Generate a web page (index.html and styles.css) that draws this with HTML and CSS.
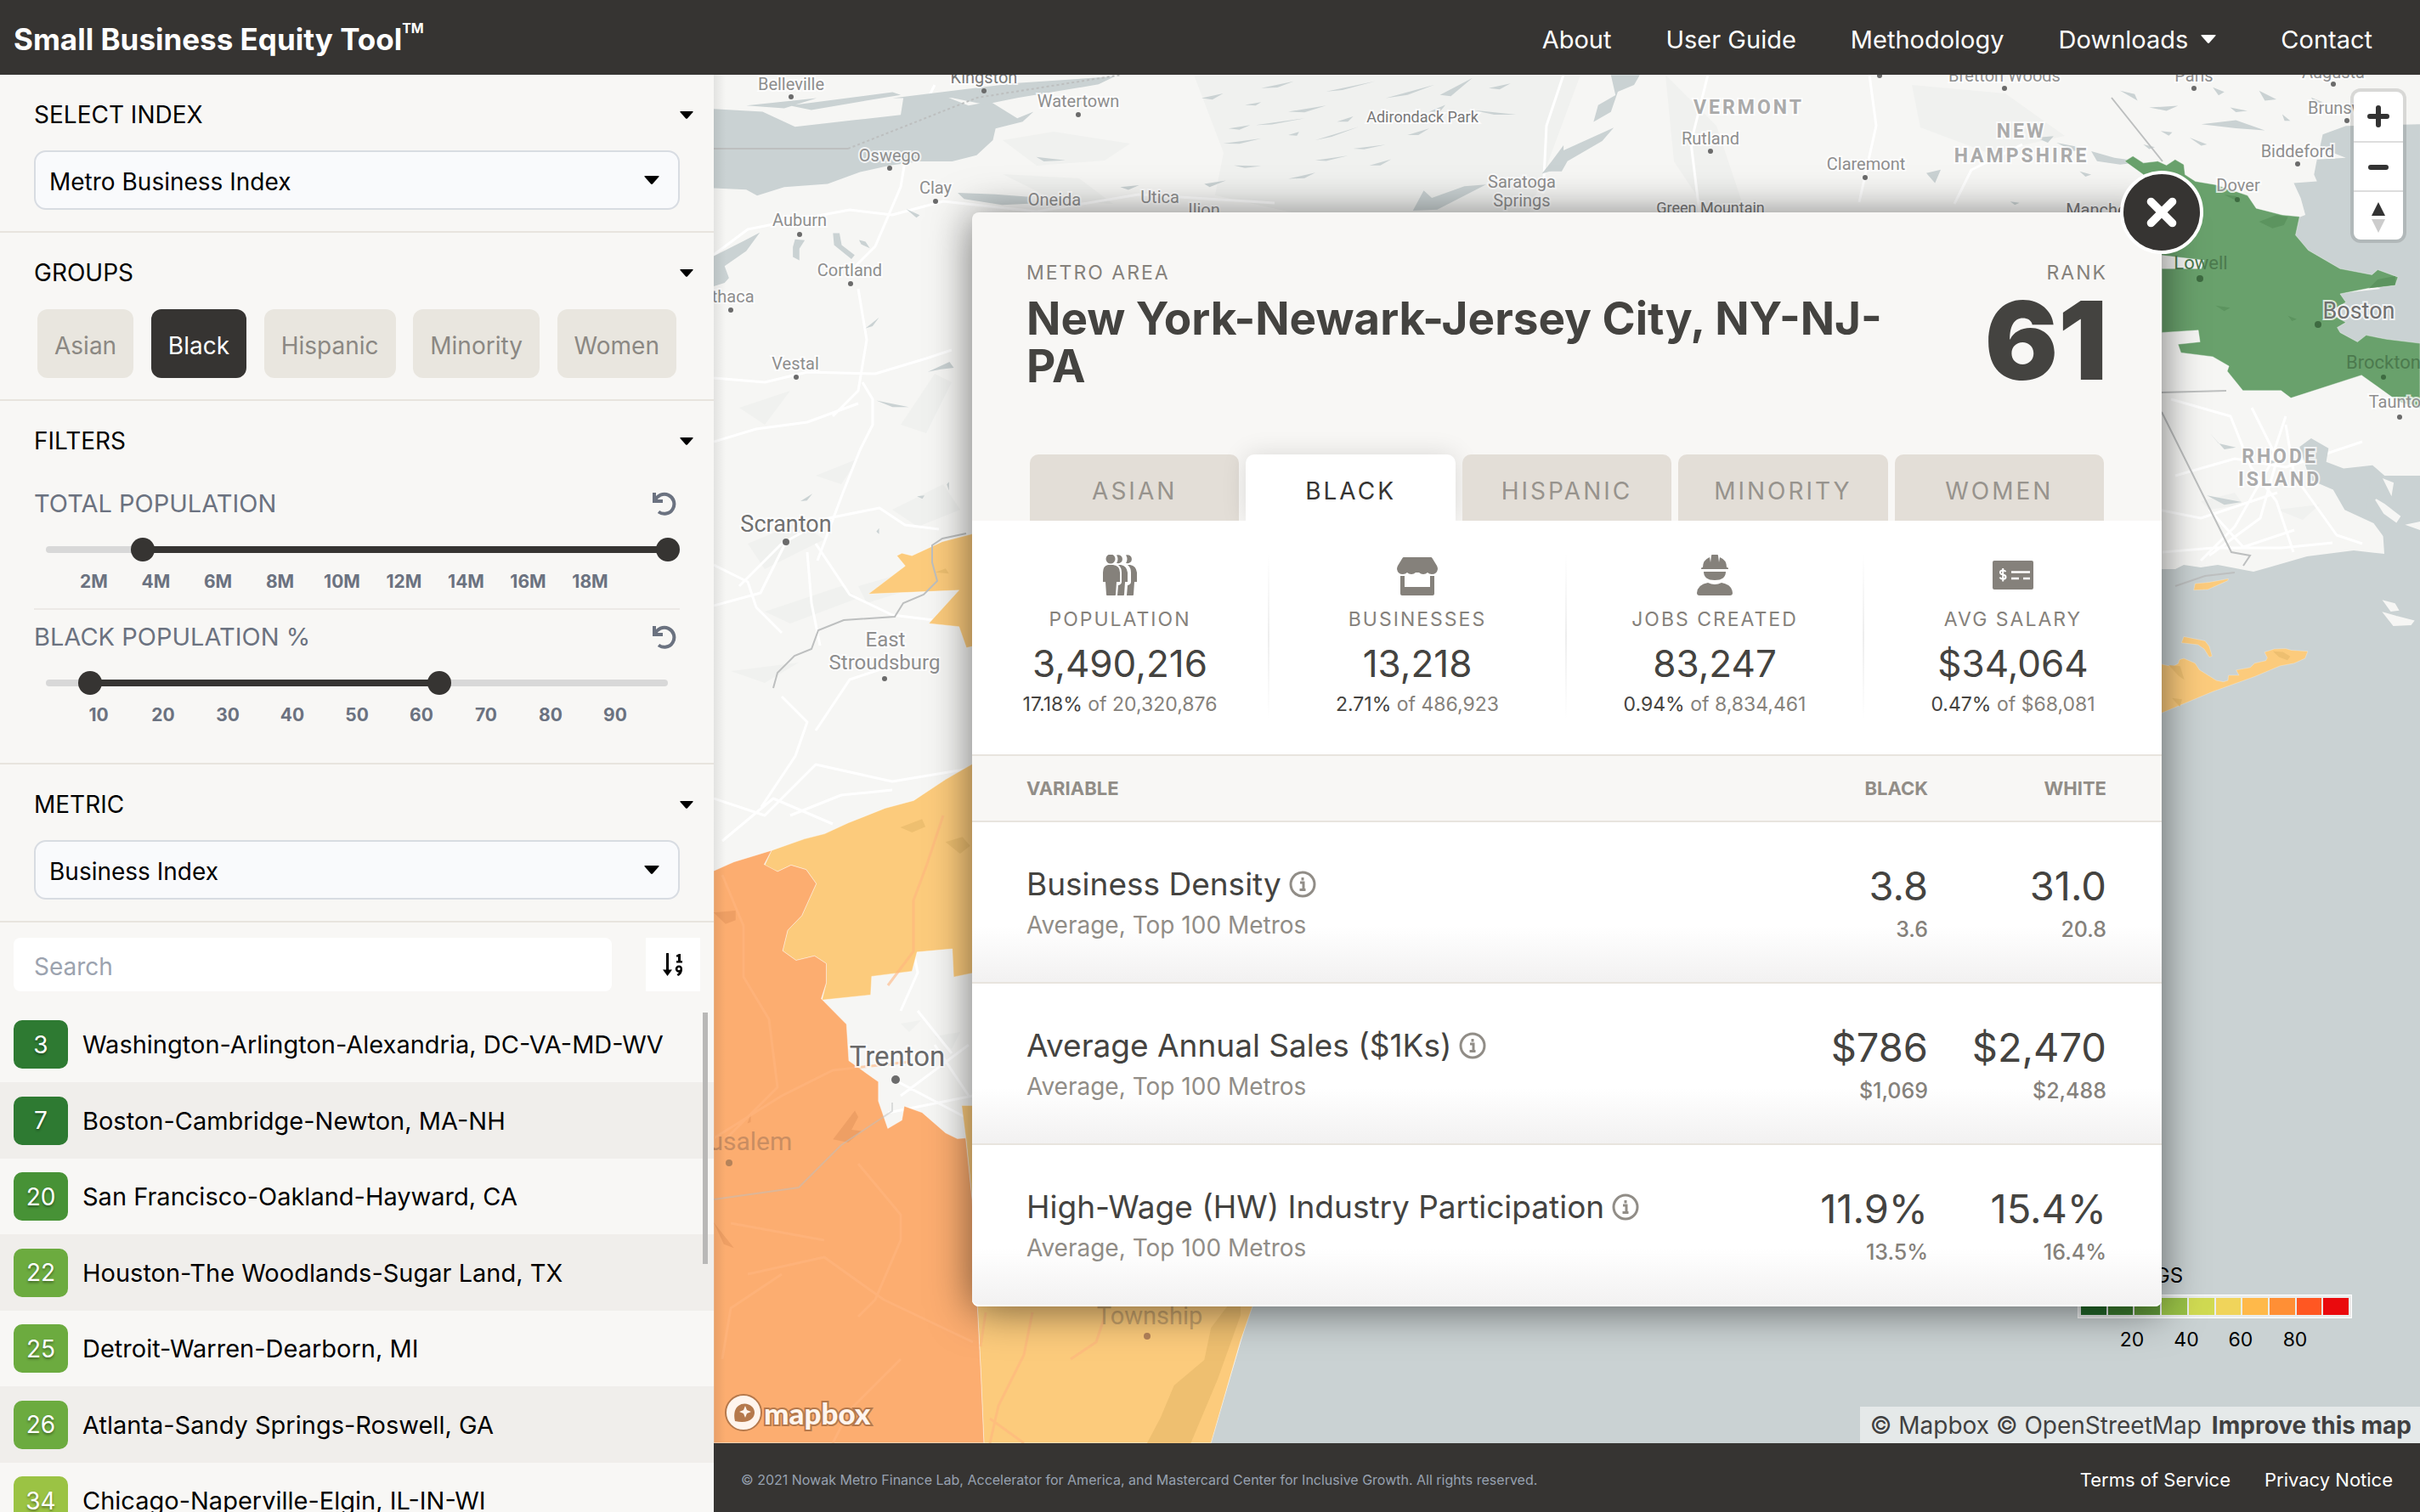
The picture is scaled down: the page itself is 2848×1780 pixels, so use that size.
FILE: index.html
```html
<!DOCTYPE html>
<html lang="en">
<head>
<meta charset="utf-8">
<title>Small Business Equity Tool</title>
<link rel="stylesheet" href="styles.css">
</head>
<body>
<div class="app">
  <header class="topbar">
    <a class="brand" href="#">Small Business Equity Tool<sup>TM</sup></a>
    <nav class="nav">
      <a href="#">About</a>
      <a href="#">User Guide</a>
      <a href="#">Methodology</a>
      <a href="#" class="has-menu">Downloads <svg class="caret" viewBox="0 0 18 10"><path d="M1 0h16q1 0 .5 1L10 9.500q-1 .8-2 0L.5 1Q0 0 1 0z"/></svg></a>
      <a href="#">Contact</a>
    </nav>
  </header>

  <aside class="sidebar">
    <section class="panel">
      <button class="panel-head" type="button">SELECT INDEX <svg class="caret small" viewBox="0 0 18 10"><path d="M1 0h16q1 0 .5 1L10 9.500q-1 .8-2 0L.5 1Q0 0 1 0z"/></svg></button>
      <div class="picker">
        <select aria-label="Index"><option>Metro Business Index</option></select>
        <svg class="caret" viewBox="0 0 18 10"><path d="M1 0h16q1 0 .5 1L10 9.500q-1 .8-2 0L.5 1Q0 0 1 0z"/></svg>
      </div>
    </section>

    <section class="panel">
      <button class="panel-head" type="button">GROUPS <svg class="caret small" viewBox="0 0 18 10"><path d="M1 0h16q1 0 .5 1L10 9.500q-1 .8-2 0L.5 1Q0 0 1 0z"/></svg></button>
      <div class="groups">
        <button type="button">Asian</button>
        <button type="button" class="active">Black</button>
        <button type="button">Hispanic</button>
        <button type="button">Minority</button>
        <button type="button">Women</button>
      </div>
    </section>

    <section class="panel filters">
      <button class="panel-head" type="button">FILTERS <svg class="caret small" viewBox="0 0 18 10"><path d="M1 0h16q1 0 .5 1L10 9.500q-1 .8-2 0L.5 1Q0 0 1 0z"/></svg></button>
      <div class="filter">
        <div class="filter-head"><span>TOTAL POPULATION</span>
          <button type="button" class="reset" aria-label="Reset total population"><svg viewBox="0 0 28 28"><path d="M2 1v10h10M3 10.500A11.500 11.500 0 1 1 7 23.500"/></svg></button></div>
        <div class="range">
          <div class="track" style="--from:15.6%;--to:100%"></div>
          <input type="range" min="0" max="1000" value="156" aria-label="Minimum total population">
          <input type="range" min="0" max="1000" value="1000" aria-label="Maximum total population">
        </div>
        <div class="ticks wide"><span>2M</span><span>4M</span><span>6M</span><span>8M</span><span>10M</span><span>12M</span><span>14M</span><span>16M</span><span>18M</span></div>
      </div>
      <div class="filter">
        <div class="filter-head"><span>BLACK POPULATION %</span>
          <button type="button" class="reset" aria-label="Reset Black population"><svg viewBox="0 0 28 28"><path d="M2 1v10h10M3 10.500A11.500 11.500 0 1 1 7 23.500"/></svg></button></div>
        <div class="range">
          <div class="track" style="--from:7.1%;--to:63.2%"></div>
          <input type="range" min="0" max="1000" value="71" aria-label="Minimum Black population percent">
          <input type="range" min="0" max="1000" value="632" aria-label="Maximum Black population percent">
        </div>
        <div class="ticks"><span>10</span><span>20</span><span>30</span><span>40</span><span>50</span><span>60</span><span>70</span><span>80</span><span>90</span></div>
      </div>
    </section>

    <section class="panel">
      <button class="panel-head" type="button">METRIC <svg class="caret small" viewBox="0 0 18 10"><path d="M1 0h16q1 0 .5 1L10 9.500q-1 .8-2 0L.5 1Q0 0 1 0z"/></svg></button>
      <div class="picker">
        <select aria-label="Metric"><option>Business Index</option></select>
        <svg class="caret" viewBox="0 0 18 10"><path d="M1 0h16q1 0 .5 1L10 9.500q-1 .8-2 0L.5 1Q0 0 1 0z"/></svg>
      </div>
    </section>

    <div class="search">
      <input type="search" placeholder="Search" aria-label="Search metros">
      <button type="button" class="sort" aria-label="Sort by rank">
        <svg viewBox="0 0 24 28"><path d="M5.500 1v21" stroke="#000" stroke-width="3" stroke-linecap="round"/><path d="M0 19.500h11L5.500 27z"/><path d="M16 2.500l3-1.500h2v8h2v2.500h-7V9h2V4.500h-2z"/><path fill-rule="evenodd" d="M19 14.500a4 4 0 0 1 4 4.500c0 4-2 7-5 8l-1.500-2c1.500-.6 2-1.300 2.300-2.200A4 4 0 0 1 19 14.500zm0 2.500a1.600 1.600 0 1 0 .01 0z"/></svg>
      </button>
    </div>

    <div class="list-wrap">
      <ol class="list">
        <li><span class="badge c1">3</span>Washington-Arlington-Alexandria, DC-VA-MD-WV</li>
        <li><span class="badge c1">7</span>Boston-Cambridge-Newton, MA-NH</li>
        <li><span class="badge c2">20</span>San Francisco-Oakland-Hayward, CA</li>
        <li><span class="badge c3">22</span>Houston-The Woodlands-Sugar Land, TX</li>
        <li><span class="badge c3">25</span>Detroit-Warren-Dearborn, MI</li>
        <li><span class="badge c3">26</span>Atlanta-Sandy Springs-Roswell, GA</li>
        <li><span class="badge c4">34</span>Chicago-Naperville-Elgin, IL-IN-WI</li>
      </ol>
      <div class="scroll-thumb"></div>
    </div>
  </aside>

  <main class="map">
    <svg class="map-art" viewBox="840 88 2008 1611" preserveAspectRatio="xMidYMid slice">
      <!-- parks and hills -->
      <g fill="#f0f1ef">
        <path d="M1405 88L1440 180 1430 230 1520 250 1800 250 1860 88z"/>
        <path d="M1960 88l60 60 30 90-40 12-40-60z M2250 100l110 10 70 50-90 20-80-30z M1180 165l60-10 90 14-30 20-80 6z M1180 205l90 5 40 30-70-5z"/>
        <path d="M880 640l60-25 30 20-70 35z M900 720l90-30 20 14-80 30z M1010 690l70-20 30 12-90 28z M1050 600l60-30 20 30-50 20z M860 790l80-10-40 24z M1060 500l40-60 20 10-30 60z M870 480l60-20-30 40z M960 560l50-20-20 30z M2590 590l40-10 10 14-40 6z M2680 600l50-6-20 18z M1100 1220l30-5-10 20z M1060 1205l24-4-14 14z"/>
      </g>
      <!-- roads -->
      <g class="roads">
        <path d="M840 300l40-30 40-8 80-15 50 6 60-16 110 12 120-20 160 10M1010 340l10 60-10 60-30 30M840 445l60 5 50-12 80 2 60-18 30-10M1015 450l12 20v30l-15 30-20 50-30 80M840 520l50-15 60-8 60-22M870 690l50-50 55-30 60-12 30 20 40 5M925 638l-30 60-55 15M950 650l5 60 10 50M840 665l40 20 10 30 30 30M960 640l40 60 50 24 65 8M1100 100l-30 60-10 60-30 70-30 30"/>
        <path d="M840 940l60 20 60-60 90 20 90-15M920 820l30 30-14 40-40 60M850 990l60-50 70 30M960 860l40-60 60-20M930 960l60-24 60-6M2010 88l-20 80 10 82M1840 88l-20 60-4 80M2200 88l8 60-20 90M2300 240l20-40 60-30"/>
        <path d="M1060 1190l20-45-8-40 30-55M1080 1190l40 50M1060 1290l80-60M1045 1310l100-20M1050 1270l95 50M1040 1320l-20-50M1100 1230l40 60M2555 470l70 20 24 60 30 40 20 60M2560 560l70-20 60 10 90-30M2600 600l40 44 60-20M2650 480l30 60-20 70-60 44M2590 660l40-40 40-70 20-60M2690 500l10 60 50 70 30 10M2540 600l50 10 90-30M2545 650l60-5 80 0 60-6"/>
      </g>
      <!-- lakes and ocean -->
      <g fill="#cad2d3">
        <g transform="translate(840 80) scale(.6378 .3954)">
          <path d="M0 122L90 130 150 175 260 155 345 140 350 88 420 80 470 112 510 100 560 150 590 130 570 160 520 180 515 215 485 260 440 278 380 278 325 290 270 310 210 345 130 355 80 380 60 362 0 358z"/>
          <path d="M140 112L330 72 345 80 180 125z M330 90l150-30 80-15 180-20-30 24-150 40-60 20-60-20z M60 112l130-22-60 30z M450 372l70 4 62 8 0 20-50 4-70-18z M0 560L55 515 85 490 60 545 20 590 28 625 20 640 0 650z"/>
          <path d="M150 510l18 3-10 25 0 35-12-10 0-30z M220 492l12 0 4 35 24 30-6 12-32-42z M268 512l12 5 8 20-16-12z M355 420l25 18-6 8z M595 265l54 10-40 3z M905 345l40-10-30 20z M750 355l35-6-20 14z M1290 425l20-60 15 22 60-35 40-5-90 75z M1545 280l23-50 0 65-40 20z"/>
          <path d="M940 225l70-15-40 16z M1000 170l90-20-60 18z M1060 130l70-18-40 20z M1110 215l80-40-50 30z M960 290l50 2-30 6z M1130 70l90-30-60 26z M1240 90l90-40-50 30z M1180 240l60-12-40 14z M1280 200l40-20-20 20z M1210 290l40-18-20 18z M1340 80l60-50-40 54z M1010 60l60-20-30 18z M1400 125l80 14-40 0z M1110 275l60-14-40 16z M1060 330l50-18-20 16z M950 180l40-10-20 14z M1150 160l30-16-10 16z M1060 200l20-10-4 12z M1320 130l30-20-10 20z M1430 60l40-14-20 18z M1240 150l40-14-20 16z M900 90l40-14-20 18z M980 110l30-8-10 10z"/>
          <path d="M280 775l25-32-12 26z M395 905l40-30 8 18-24 4z M300 990l60 20-30 0z M160 1290l22-22-10 20z M300 1380l5-10 0 18z M430 1240l4-8 0 26z M375 1275l14-2-4 10z"/>
        </g>
        <g transform="translate(1780 0) scale(.6811 .3954)">
          <path d="M1568 370L1440 375 1400 400 1395 440 1440 470 1390 475 1385 520 1390 540 1350 545 1362 590 1370 640 1355 650 1350 700 1375 745 1430 800 1500 860 1420 875 1400 930 1440 1020 1568 1030z"/>
          <path d="M170 223l50 0-10 30-28 20-12 60-30 30 8-50 30-30z M60 510l25-60 90-70-20 40-60 60-10 30z M1000 450l40 20 50 12-40 8-40-10z M715 515l25-10-10 40z M1190 370l60-12 50 30-50-6z M1100 320l50-5-20 15z M1210 260l20 14-10 10z M1290 270l30 26-20 4z M1050 270l25 10 5 20z M905 410l30-5-10 20z M940 425l45 15-15 10z M1120 390l20 4-6 10z M1240 320l30 10-20 4z M1170 410l30 20-10 4z M1330 340l14 20-10 0z M1380 290l20 14-14 4z M1500 300l30 24-20 4z M1090 430l20 8-10 6z M860 600l16 4-8 6z M980 510l20 10-10 6z"/>
          <path d="M1205 1290l15 30 30 12-20 6z M1360 1330l20-25 30 30-4 40 30 20 50-10 60 90 22 80 0 73-50 0-30-70-50-40-20-60-40-30z M1200 1475l60 20-30 8z M1310 1370l10 5-10 6z"/>
        </g>
        <path d="M1425 1699L1475 1530 1640 1290 2200 800 2530 670 2560 670 2570 665 2590 668 2610 665 2652 673 2670 668 2715 655 2770 648 2806 652 2804 622 2785 600 2790 560 2848 560V1699z"/>
      </g>
      <g fill="#f6f6f4" stroke="#f6f6f4" stroke-width="2">
        <path d="M2806 708l12 3 4 7-8 1z M2806 722l14 4 20 5-3 4-20 1z M2796 588l10 6 18 14-4 6-14-10z M2834 618l14-3v8z M2806 565l10 4-2 12z"/>
      </g>
      <!-- metro areas -->
      <g transform="translate(840 600) scale(.3954 .7526)">
        <path class="amber" d="M545 72L560 68 590 72 680 50 769 38 800 38 800 214 769 214 752 216 730 183 640 178 730 126 460 132 485 122 570 88z"/>
        <path class="amber" d="M172 533L270 515 330 507 400 490 510 467 595 455 690 422 769 398 900 370 900 725 769 725 714 731 710 687 605 692 590 722 470 730 467 759 322 767 335 740 335 710 300 698 245 705 205 690 220 658 262 635 305 585 275 563 230 556 190 566 150 558z"/>
        <path class="amber" d="M738 932L900 932 1700 1100 1568 1300 1480 1460 804 1460 795 1350 785 1250 769 1080 752 990z"/>
        <path class="orange" d="M0 565L60 551 172 533 150 555 190 566 230 556 275 563 305 585 262 635 220 658 205 690 245 705 300 698 335 710 335 740 320 765 395 805 402 862 490 895 490 925 518 968 560 955 567 933 620 943 690 975 725 984 750 983 769 1080 785 1250 795 1350 804 1460 0 1460z"/>
        <path fill="#eebf70" d="M1290 1460L1330 1420 1370 1370 1460 1330 1480 1280 1530 1245 1568 1245 1568 1260 1500 1360 1420 1460z"/>
        <path fill="#eebf70" d="M555 497L620 484 630 496 590 505z M690 520l50-8 23 14-30 12z M660 98l30-6 10 8z"/>
        <path fill="#ee9f64" d="M355 985L420 940 430 950 410 970 440 972 400 990z M0 630l65-3 0 15-30 6z M100 960l10-14 0 12z M0 1115l60 40-30-6z"/>
      </g>
      <g transform="translate(2520 560) scale(.3333 .3827)">
        <path class="amber" d="M185 352L190 332 240 328 308 317 305 323 235 350z"/>
        <path class="amber" d="M142 514L150 495 225 508 240 525 250 555 240 558 222 533 200 520z"/>
        <path class="amber" d="M0 580L72 580 110 587 130 578 135 566 150 562 190 577 205 597 265 630 290 634 306 630 308 614 345 614 335 598 385 590 400 577 440 569 445 560 435 543 470 533 510 532 530 537 588 540 578 562 540 577 490 585 400 618 250 665 72 730 0 750z"/>
        <path fill="#eebf70" d="M97 583l40 3 15 42-20-12z M465 540l35 2 26 14-10 12-30-10z M108 684l36 4-8 22z"/>
      </g>
      <!-- borders -->
      <g class="borders">
        <path d="M840 175h158"/>
        <path stroke-dasharray="3 3" d="M998 175L1150 115 1320 88"/>
        <path d="M2544 462l76-2M2544 485l82 165 22 4-8 12M2560 690l35-12 35-4"/>
        <path stroke="#c3c7c8" d="M910 810l5-18 20-20 20-8 8-22 30-12 60-4 10-16 24-10 16-16-6-22 0-20 12-8 28-6M2485 115l60 75"/>
        <path stroke="#c98350" stroke-opacity=".5" stroke-width="2" d="M840 1412l100-14 50-50 60-40 0-10"/>
      </g>
      <g transform="translate(1780 0) scale(.6811 .3954)">
        <path class="green" d="M1058 480L1072 465 1090 485 1115 480 1130 492 1145 475 1160 490 1162 520 1180 540 1215 550 1270 582 1285 620 1330 640 1360 645 1353 700 1375 745 1430 800 1485 818 1495 803 1530 825 1525 850 1480 858 1430 875 1440 900 1410 930 1440 960 1425 975 1430 990 1460 1018 1475 998 1510 1010 1568 1022 1568 1215 1530 1195 1467 1117 1345 1185 1328 1163 1262 1163 1235 1105 1238 1090 1210 1062 1155 1050 1150 1025 1188 1018 1185 983 1122 990 1122 800 1190 800 1195 775 1122 760 1090 520z"/>
        <path fill="#5c945f" d="M1290 660l30-20 20 6-7 24-20 10z M1230 580l20 4 8 20z M1480 858l45-10 0-26-30 10z M1215 910l25 6-10 10z M1340 940l15 10-8 6z"/>
      </g>
      <g class="tint-roads">
        <path d="M850 1030l25 60 0 60 30 50 10 80-60 60M840 1340l80-50 60-30 90-10M1010 1370l50 60v30l-30 70-20 20M880 1500l90-20 70 50 105 50M860 1440l110 20M1060 1600l-60 60-20 39M850 1600l10-60 60-40"/>
        <path stroke="#ffdd9c" d="M1110 960l-20 60-15 40 0 60-30 40M1215 1545l-10 50-30 60-10 44M1300 1550l-10 30-30 20M1165 1670l40 29M1160 1545l-6 40"/>
      </g>
      <!-- place names -->
      <g class="places">
        <text x="931" y="106">Belleville</text><text x="1158" y="98" class="dark">Kingston</text>
        <text x="1269" y="126">Watertown</text><text x="1047" y="190">Oswego</text>
        <text x="1101" y="228">Clay</text><text x="941" y="266">Auburn</text>
        <text x="1241" y="242">Oneida</text><text x="1365" y="239">Utica</text>
        <text x="1417" y="254">Ilion</text><text x="1000" y="325">Cortland</text>
        <text x="860" y="356">Ithaca</text><text x="936" y="435">Vestal</text>
        <text x="1674" y="144" class="dark park">Adirondack Park</text>
        <text x="1791" y="221">Saratoga</text><text x="1791" y="243">Springs</text>
        <text x="2013" y="170">Rutland</text><text x="2196" y="200">Claremont</text>
        <text x="2359" y="96">Bretton Woods</text><text x="2582" y="96">Paris</text>
        <text x="2746" y="92">Augusta</text><text x="2762" y="134">Brunswick</text>
        <text x="2704" y="185">Biddeford</text><text x="2634" y="225">Dover</text>
        <text x="2013" y="251" class="dark park">Green Mountain</text><text x="2484" y="254" class="dark">Manchester</text>
        <text x="2590" y="317" class="on-green">Lowell</text><text x="2805" y="434" class="on-green">Brockton</text>
        <text x="2824" y="480">Taunton</text>
        <text x="1042" y="761" class="mid">East</text><text x="1041" y="788" class="mid">Stroudsburg</text>
        <text x="925" y="626" class="big">Scranton</text><text x="2776" y="375" class="big">Boston</text>
        <text x="1056" y="1255" class="huge">Trenton</text>
        <text x="862" y="1354" class="tinted">Jerusalem</text><text x="1353" y="1559" class="tinted sand">Township</text>
        <text x="2058" y="134" class="state">VERMONT</text><text x="2379" y="162" class="state">NEW</text>
        <text x="2379" y="191" class="state">HAMPSHIRE</text><text x="2683" y="545" class="state">RHODE</text><text x="2683" y="572" class="state">ISLAND</text>
      </g>
      <g fill="#6b6b6b">
        <circle cx="931" cy="114" r="3"/><circle cx="1158" cy="107" r="3"/><circle cx="1269" cy="135" r="3"/><circle cx="1047" cy="198" r="3"/><circle cx="1101" cy="237" r="3"/><circle cx="941" cy="276" r="3"/><circle cx="1001" cy="334" r="3"/><circle cx="860" cy="365" r="3"/><circle cx="937" cy="444" r="3"/><circle cx="925" cy="638" r="4"/><circle cx="1041" cy="799" r="3"/><circle cx="1054" cy="1271" r="5"/><circle cx="2013" cy="178" r="3"/><circle cx="2195" cy="209" r="3"/><circle cx="2359" cy="104" r="3"/><circle cx="2582" cy="104" r="3"/><circle cx="2746" cy="99" r="3"/><circle cx="2762" cy="142" r="3"/><circle cx="2704" cy="193" r="3"/><circle cx="2824" cy="491" r="3"/><circle cx="2212" cy="89" r="3"/>
        <g fill="#3e6b41"><circle cx="2633" cy="235" r="3"/><circle cx="2589" cy="328" r="4"/><circle cx="2728" cy="382" r="4"/><circle cx="2805" cy="444" r="3"/></g>
        <g fill="#b5835a"><circle cx="858" cy="1369" r="4"/><circle cx="1350" cy="1573" r="4"/></g>
      </g>
    </svg>

    <div class="map-controls">
      <button type="button" aria-label="Zoom in"><svg viewBox="0 0 58 58"><path d="M29 19v20M19 29h20" stroke="#333" stroke-width="6" stroke-linecap="round"/></svg></button>
      <button type="button" aria-label="Zoom out"><svg viewBox="0 0 58 58"><path d="M20 29h18" stroke="#333" stroke-width="6" stroke-linecap="round"/></svg></button>
      <button type="button" aria-label="Reset bearing"><svg viewBox="0 0 58 58"><path d="M21 28l8-16 8 16z" fill="#333"/><path d="M21 32l8 16 8-16z" fill="#ccc"/></svg></button>
    </div>

    <div class="legend">
      <div class="legend-title">RANKINGS</div>
      <div class="swatches"><i class="s0"></i><i class="s1"></i><i class="s2"></i><i class="s3"></i><i class="s4"></i><i class="s5"></i><i class="s6"></i><i class="s7"></i><i class="s8"></i><i class="s9"></i></div>
      <div class="legend-ticks"><span>20</span><span>40</span><span>60</span><span>80</span></div>
    </div>

    <a class="mapbox" href="#"><svg viewBox="0 0 44 44"><circle cx="22" cy="22" r="21" fill="#fff5ed" stroke="#b5794c" stroke-width="2"/><path d="M12 32c-2-9 0-15 4-18 5-4 12-3 16 1s4 10 0 14c-4 4-11 5-20 3z" fill="#b5794c"/><path d="M24 14l2 5 5 2-5 2-2 5-2-5-5-2 5-2z" fill="#fff5ed"/></svg><span>mapbox</span></a>
    <div class="attribution"><a href="#">© Mapbox</a> <a href="#">© OpenStreetMap</a> <a href="#" class="improve">Improve this map</a></div>

    <article class="card">
      <button type="button" class="close" aria-label="Close"><svg viewBox="0 0 40 40"><path d="M8 8l24 24M32 8L8 32" stroke="#fff" stroke-width="9" stroke-linecap="round"/></svg></button>
      <header class="card-head">
        <div class="metro"><div class="eyebrow">METRO AREA</div><h1>New York-Newark-Jersey City, NY-NJ-PA</h1></div>
        <div class="rank"><div class="eyebrow">RANK</div><strong>61</strong></div>
      </header>
      <div class="tabs">
        <button type="button">ASIAN</button>
        <button type="button" class="active">BLACK</button>
        <button type="button">HISPANIC</button>
        <button type="button">MINORITY</button>
        <button type="button">WOMEN</button>
      </div>
      <div class="stats">
        <div class="stat">
          <svg viewBox="0 0 48 48"><circle cx="13" cy="5" r="5.500"/><path d="M10 12h6q8 1 8 9v11h-4l-1 15q0 1-1 1H9q-1 0-1-1L7 32H4V21q0-8 6-9z"/><path d="M20 .6a5 5 0 1 1 0 9.200q3-4.600 0-9.200zM22 12h3q7 1 8 9v11h-3l-1 15q0 1-1 1h-7l1-12q4-1 4-4V21q0-6-4-9zM31 .6a5 5 0 1 1 0 9.200q3-4.600 0-9.200zM33 12h3q7 1 8 9v11h-3l-1 15q0 1-1 1h-7l1-12q4-1 4-4V21q0-6-4-9z"/></svg>
          <div class="stat-label">POPULATION</div><div class="stat-value">3,490,216</div><div class="stat-note"><b>17.18%</b> of 20,320,876</div>
        </div>
        <div class="stat">
          <svg viewBox="0 0 48 48"><path d="M8 3h32q1 0 1.500 1L47 13q1 2 1 4-1 6-7 6-3 0-5-2-2 2-5 2t-5-2h-4q-2 2-5 2t-5-2q-2 2-5 2-6 0-7-6 0-2 1-4l5.500-9Q7 3 8 3zM4 25h5v13h30V25h5v21q0 2-2 2H6q-2 0-2-2z"/></svg>
          <div class="stat-label">BUSINESSES</div><div class="stat-value">13,218</div><div class="stat-note"><b>2.71%</b> of 486,923</div>
        </div>
        <div class="stat">
          <svg viewBox="0 0 48 48"><path d="M21 0h6q1 0 1 1l1 8 1-6q8 3 8 12h1q1 0 1 2H8q0-2 1-2h1q0-9 8-12l1 6 1-8q0-1 1-1zM11 20h26q0 10-13 10T11 20zM16 33q8 4 16 0 12 2 13 12 0 3-3 3H6q-3 0-3-3 1-10 13-12z"/></svg>
          <div class="stat-label">JOBS CREATED</div><div class="stat-value">83,247</div><div class="stat-note"><b>0.94%</b> of 8,834,461</div>
        </div>
        <div class="stat">
          <svg viewBox="0 0 48 48"><rect y="7" width="48" height="34" rx="2"/><path d="M22 20.500h22M22 28h9M36 28h8" stroke="#fff" stroke-width="2.400" fill="none"/><path d="M15.500 20q-1.500-2-4-1.500-3 .5-2.500 3 .4 1.500 3 2 3.500.6 3.500 2.700 0 2.300-3 2.500-3 .2-4-2M12.200 16v15.500" stroke="#fff" stroke-width="2" fill="none"/></svg>
          <div class="stat-label">AVG SALARY</div><div class="stat-value">$34,064</div><div class="stat-note"><b>0.47%</b> of $68,081</div>
        </div>
      </div>
      <table class="vars">
        <thead><tr><th>VARIABLE</th><th>BLACK</th><th>WHITE</th></tr></thead>
        <tbody>
          <tr><td><div class="name">Business Density <svg class="info" viewBox="0 0 32 32"><circle cx="16" cy="16" r="14"/><path d="M13 14h4v8M12.500 22.500h7M16 8v3.500"/></svg></div><div class="avg">Average, Top 100 Metros</div></td><td><div class="val">3.8</div><div class="sub">3.6</div></td><td><div class="val">31.0</div><div class="sub">20.8</div></td></tr>
          <tr><td><div class="name">Average Annual Sales ($1Ks) <svg class="info" viewBox="0 0 32 32"><circle cx="16" cy="16" r="14"/><path d="M13 14h4v8M12.500 22.500h7M16 8v3.500"/></svg></div><div class="avg">Average, Top 100 Metros</div></td><td><div class="val">$786</div><div class="sub">$1,069</div></td><td><div class="val">$2,470</div><div class="sub">$2,488</div></td></tr>
          <tr><td><div class="name">High-Wage (HW) Industry Participation <svg class="info" viewBox="0 0 32 32"><circle cx="16" cy="16" r="14"/><path d="M13 14h4v8M12.500 22.500h7M16 8v3.500"/></svg></div><div class="avg">Average, Top 100 Metros</div></td><td><div class="val">11.9%</div><div class="sub">13.5%</div></td><td><div class="val">15.4%</div><div class="sub">16.4%</div></td></tr>
        </tbody>
      </table>
    </article>
  </main>

  <footer class="footer">
    <p>© 2021 Nowak Metro Finance Lab, Accelerator for America, and Mastercard Center for Inclusive Growth. All rights reserved.</p>
    <a href="#">Terms of Service</a>
    <a href="#">Privacy Notice</a>
  </footer>
</div>
</body>
</html>
```
FILE: styles.css
```css
* { box-sizing: border-box; }
body { margin: 0; font-family: Inter, "Open Sans", sans-serif; font-size: 28px; color: #000; }
a { color: inherit; text-decoration: none; }
button, select, input { font: inherit; color: inherit; margin: 0; }
button { border: 0; background: none; padding: 0; }

.app {
  display: grid;
  grid-template: "top top" 88px "side map" minmax(0, 1fr) "side foot" auto / 840px minmax(0, 1fr);
  height: 100vh;
}

/* top bar */
.topbar { grid-area: top; display: flex; justify-content: space-between; align-items: center; padding: 4px 56px 0 16px; background: #363432; color: #fff; }
.brand { font-size: 35px; font-weight: 700; line-height: 48px; }
.brand sup { font-size: 16px; line-height: 0; vertical-align: 20px; }
.nav { display: flex; align-items: center; gap: 64px; font-size: 29px; }
.has-menu { display: flex; align-items: center; gap: 15px; margin-right: 12px; }
.caret { width: 18px; height: 10px; fill: currentColor; flex: none; }
.caret.small { width: 16px; height: 9px; }

/* sidebar */
.sidebar { grid-area: side; display: flex; flex-direction: column; min-height: 0; overflow: hidden; background: #f8f7f5; }
.panel { flex: none; padding: 27px 40px 25px; border-bottom: 2px solid #e8e4de; }
.panel-head { display: flex; justify-content: space-between; align-items: center; width: 776px; line-height: 40px; }
.picker { display: grid; align-items: center; margin-top: 22px; }
.picker select { grid-area: 1 / 1; height: 70px; padding: 4px 16px 0; border: 2px solid #d8dce2; border-radius: 14px; background: #f9fafc; appearance: none; }
.picker .caret { grid-area: 1 / 1; justify-self: end; margin-right: 24px; pointer-events: none; }
.groups { display: flex; justify-content: space-between; margin: 23px 4px 0; }
.groups button { height: 81px; padding: 4px 20px 0; border-radius: 12px; background: #e9e6df; color: #8b8883; }
.groups .active { background: #363432; color: #fff; }

.filters { padding-bottom: 41px; }
.filter + .filter { padding-top: 12px; border-top: 2px solid #ece9e6; margin-top: 16px; }
.panel-head + .filter { margin-top: 34px; }
.filter-head { display: flex; justify-content: space-between; align-items: center; line-height: 40px; font-size: 29px; color: #6b7280; }
.reset { width: 28px; height: 28px; margin-right: 4px; }
.reset svg { display: block; fill: none; stroke: #6b7280; stroke-width: 4; }
.range { display: grid; align-items: center; margin-top: 20px; }
.range > * { grid-area: 1 / 1; }
.track { height: 8px; margin: 0 14px; border-radius: 4px; background: linear-gradient(90deg, #d8d8d8 var(--from), #363432 var(--from) var(--to), #d8d8d8 var(--to)); }
.range input { width: 100%; height: 28px; appearance: none; background: none; pointer-events: none; }
.range input::-webkit-slider-thumb { appearance: none; width: 28px; height: 28px; border-radius: 50%; background: #363432; pointer-events: auto; }
.ticks { display: grid; grid-template-columns: repeat(9, 76px); padding-left: 38px; margin-top: 9px; text-align: center; font-size: 21px; line-height: 30px; font-weight: 700; color: #6b7280; }
.ticks.wide { grid-template-columns: repeat(9, 73px); padding-left: 34px; }

.search { flex: none; display: flex; justify-content: space-between; padding: 18px 16px 18px; }
.search input { width: 704px; height: 63px; padding: 4px 24px 0; border: 0; border-radius: 8px; background: #fff; }
.search input::placeholder { color: #9ca3af; }
.sort { display: grid; place-items: center; width: 64px; height: 63px; background: #fff; }
.sort svg { width: 24px; height: 28px; }
.list-wrap { position: relative; flex: 1; min-height: 0; overflow: hidden; }
.list { list-style: none; margin: 0; padding: 0; font-size: 29px; }
.list li { display: flex; align-items: center; gap: 17px; height: 89px; padding-left: 16px; white-space: nowrap; }
.list li:nth-child(even) { height: 90px; background: #f0eeeb; }
.badge { display: grid; place-items: center; width: 64px; height: 57px; border-radius: 10px; color: #fff; font-size: 28px; text-shadow: 0 2px 3px rgba(0, 0, 0, .4); }
.c1 { background: #2e7a32; }
.c2 { background: #479236; }
.c3 { background: #6cab3f; }
.c4 { background: #9bc344; }
.scroll-thumb { position: absolute; top: 7px; right: 7px; width: 6px; height: 296px; background: #b9b8b7; }

/* map */
.map { grid-area: map; position: relative; display: grid; place-items: center; overflow: hidden; background: #f6f6f4; }
.map::before { content: ""; position: absolute; inset: 0 auto 0 0; width: 14px; background: linear-gradient(90deg, rgba(0, 0, 0, .08), transparent); z-index: 1; }
.map-art { position: absolute; inset: 0; width: 100%; height: 100%; }
.roads path { fill: none; stroke: #fff; stroke-width: 3; stroke-linejoin: round; }
.tint-roads path { fill: none; stroke: #ffb67f; stroke-width: 3; stroke-linejoin: round; opacity: .6; }
.borders path { fill: none; stroke: #bdbfbf; stroke-width: 2; }
.amber, .orange, .green { stroke: #fff; stroke-width: 1; stroke-opacity: .7; }
.amber { fill: #fccb7c; }
.orange { fill: #fcad70; }
.green { fill: #69a16c; }
.places { font-family: Roboto, sans-serif; font-size: 20px; fill: #8e8e8e; text-anchor: middle; stroke: #fff; stroke-width: 4px; stroke-opacity: .75; paint-order: stroke; }
.places .dark { fill: #777; }
.places .park { font-size: 18px; }
.places .mid { font-size: 24px; }
.places .big { font-size: 27px; fill: #707070; }
.places .huge { font-size: 33px; fill: #6a6a6a; }
.places .tinted { font-size: 30px; fill: #c98d62; stroke: none; }
.places .sand { font-size: 29px; fill: #c7a26a; }
.places .on-green { fill: #4c7a4e; stroke: none; font-size: 22px; }
.places .state { font-size: 23px; font-weight: 700; letter-spacing: 3px; fill: #aaa; }

.map-controls { position: absolute; top: 20px; right: 20px; width: 58px; display: grid; border-radius: 8px; background: #fff; box-shadow: 0 0 0 4px rgba(0, 0, 0, .12); }
.map-controls button { height: 58px; }
.map-controls button + button { border-top: 2px solid #ddd; }
.map-controls svg { display: block; }

.legend { position: absolute; right: 80px; bottom: 108px; width: 323px; font-size: 23px; }
.legend-title { font-size: 24px; line-height: 28px; margin-bottom: 8px; }
.swatches { display: grid; grid-template-columns: repeat(10, 1fr); gap: 2px; padding: 3px; border: 1px solid #fff; background: rgba(255, 255, 255, .6); }
.swatches i { height: 20px; }
.s0 { background: #236929; } .s1 { background: #3c7d2f; } .s2 { background: #61983a; } .s3 { background: #98c046; } .s4 { background: #d0da52; }
.s5 { background: #f0d45b; } .s6 { background: #ffb94a; } .s7 { background: #ff8f35; } .s8 { background: #ff5722; } .s9 { background: #ea0a0d; }
.legend-ticks { display: grid; grid-template-columns: repeat(4, 64px); padding-left: 32px; margin-top: 11px; text-align: center; line-height: 28px; }

.mapbox { position: absolute; left: 13px; bottom: 14px; display: flex; align-items: center; gap: 2px; }
.mapbox svg { width: 44px; height: 44px; }
.mapbox span { font-family: Lato, sans-serif; font-size: 35px; line-height: 40px; font-weight: 900; color: #fff5ed; -webkit-text-stroke: 4px #b5794c; paint-order: stroke fill; }
.attribution { position: absolute; right: 0; bottom: 0; padding: 2px 10px 0 12px; line-height: 41px; font-size: 28px; color: #404040; background: rgba(255, 255, 255, .5); white-space: nowrap; }
.improve { margin-left: 4px; font-weight: 700; }

/* metro card */
.card { position: relative; width: 1400px; border-radius: 8px; background: #f8f7f5; color: #444340; box-shadow: 0 4px 50px rgba(0, 0, 0, .55); }
.close { position: absolute; top: -49px; right: -49px; display: grid; place-items: center; width: 98px; height: 98px; border: 4px solid #fff; border-radius: 50%; background: #363432; }
.close svg { width: 42px; height: 42px; }
.card-head { display: flex; justify-content: space-between; height: 285px; padding: 55px 64px 0; }
.eyebrow { font-size: 23px; line-height: 32px; letter-spacing: 2px; color: #85817b; }
.metro { width: 1040px; }
.metro h1 { margin: 10px 0 0; font-size: 53px; line-height: 56px; font-weight: 700; }
.rank { text-align: right; }
.rank strong { display: block; margin-top: 14px; font-size: 128px; line-height: 100px; font-weight: 900; }
.tabs { display: grid; grid-template-columns: repeat(5, 1fr); gap: 8px; padding: 0 68px; overflow: hidden; margin-top: -40px; padding-top: 40px; }
.tabs button { height: 78px; padding-top: 8px; border-radius: 10px 10px 0 0; background: #e3ded7; color: #97938d; font-size: 28px; letter-spacing: 3px; }
.tabs .active { background: #fff; color: #363432; box-shadow: 0 0 30px rgba(0, 0, 0, .12); }
.stats { display: grid; grid-template-columns: repeat(4, 1fr); padding: 40px 0 43px; background: #fff; }
.stat { display: flex; flex-direction: column; align-items: center; }
.stat:not(:last-child) { border-right: 2px solid; border-image: linear-gradient(transparent, #eee 50%, transparent) 1; }
.stat svg { width: 48px; height: 48px; fill: #85817b; }
.stat-label { margin-top: 12px; font-size: 23px; line-height: 32px; letter-spacing: 2px; color: #85817b; }
.stat-value { margin-top: 8px; font-size: 44px; line-height: 56px; }
.stat-note { margin-top: 4px; font-size: 23px; line-height: 32px; color: #85817b; }
.stat-note b { font-weight: 400; color: #444340; }

.vars { width: 100%; table-layout: fixed; border-collapse: separate; border-spacing: 0; }
.vars th { height: 80px; padding: 0 65px 0 0; border: solid #e8e4de; border-width: 2px 0; background: #f8f7f5; text-align: right; font-size: 22px; font-weight: 700; color: #918d87; }
.vars th:first-child, .vars td:first-child { padding: 0 0 0 64px; text-align: left; }
.vars td:first-child { padding-top: 50px; }
.vars th:nth-child(2), .vars td:nth-child(2) { width: 220px; padding-right: 0; }
.vars th:nth-child(3), .vars td:nth-child(3) { width: 275px; }
.vars td { height: 190px; padding: 50px 65px 0 0; vertical-align: top; text-align: right; background: linear-gradient(#fff 65%, #f2f1f1); border-bottom: 2px solid #e8e4de; }
.vars tbody td:first-child { padding-top: 49px; }
.vars tbody tr:last-child td { border-bottom-color: #fff; }
.vars tbody tr:last-child td:first-child { border-bottom-left-radius: 8px; }
.vars tbody tr:last-child td:last-child { border-bottom-right-radius: 8px; }
.name { display: flex; align-items: center; gap: 9px; font-size: 37px; line-height: 48px; white-space: nowrap; }
.avg { margin-top: 4px; line-height: 40px; color: #918d87; }
.val { font-size: 47px; line-height: 50px; }
.sub { margin-top: 6px; font-size: 25px; line-height: 40px; font-weight: 500; color: #85817b; }
.info { flex: none; width: 32px; height: 32px; fill: none; stroke: #918d87; stroke-width: 3; }

/* footer */
.footer { grid-area: foot; display: flex; align-items: center; gap: 40px; height: 81px; padding: 4px 32px 0; background: #363432; color: #fff; font-size: 22px; }
.footer p { flex: 1; margin: 0; font-size: 16px; color: #96a1b0; }
```
